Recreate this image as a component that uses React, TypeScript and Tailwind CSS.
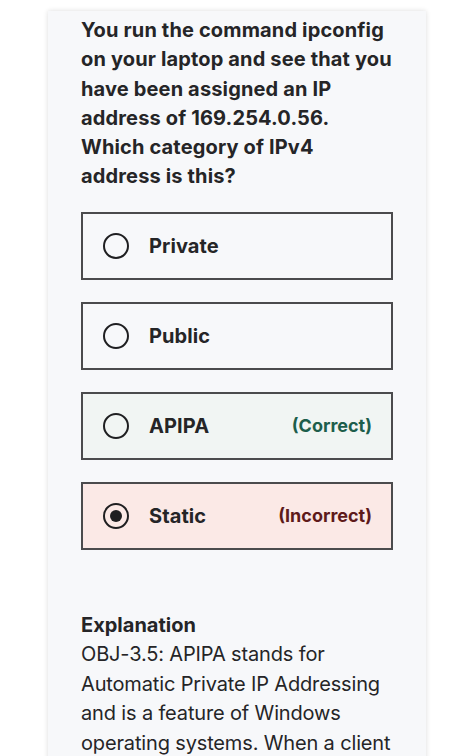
import React from "react";

type Opt = { label: string; state?: "correct" | "incorrect"; selected?: boolean };

const options: Opt[] = [
  { label: "Private" },
  { label: "Public" },
  { label: "APIPA", state: "correct" },
  { label: "Static", state: "incorrect", selected: true },
];

const question = [
  "You run the command ipconfig",
  "on your laptop and see that you",
  "have been assigned an IP",
  "address of 169.254.0.56.",
  "Which category of IPv4",
  "address is this?",
];

const explanation = [
  "OBJ-3.5: APIPA stands for",
  "Automatic Private IP Addressing",
  "and is a feature of Windows",
  "operating systems. When a client",
];

function Option({ o }: { o: Opt }) {
  const bg =
    o.state === "correct" ? "bg-[#f1f5f3]" : o.state === "incorrect" ? "bg-[#fbe9e6]" : "bg-[#f7f8fa]";
  return (
    <div className={`h-[68px] border-2 border-[#4b4b4d] ${bg} flex items-center pl-[20px] pr-[19px]`}>
      <div className="w-[26px] h-[26px] rounded-full border-[2.5px] border-[#1f1f21] flex items-center justify-center shrink-0">
        {o.selected && <div className="w-[12px] h-[12px] rounded-full bg-[#1f1f21]" />}
      </div>
      <span className="ml-[20px] text-[20px] font-bold text-[#252527] leading-none tracking-[0.1px]">{o.label}</span>
      {o.state === "correct" && (
        <span className="ml-auto text-[18px] font-bold text-[#1d5e4b] leading-none">(Correct)</span>
      )}
      {o.state === "incorrect" && (
        <span className="ml-auto text-[18px] font-bold text-[#5e1a1a] leading-none">(Incorrect)</span>
      )}
    </div>
  );
}

export default function App() {
  return (
    <div className="w-[474px] h-[756px] bg-white overflow-hidden pt-[11px]" style={{ fontFamily: "Inter, 'Noto Sans', sans-serif" }}>
      <div className="ml-[48px] w-[378px] min-h-[760px] bg-[#f7f8fa] shadow-[0_0_5px_rgba(0,0,0,0.14)] px-[33px] pt-[5px]">
        <p className="text-[20px] leading-[29.3px] font-bold text-[#252527] tracking-[0.15px]">
          {question.map((l) => (
            <span key={l} className="block whitespace-nowrap">
              {l}
            </span>
          ))}
        </p>
        <div className="mt-[20px] flex flex-col gap-[22px]">
          {options.map((o) => (
            <Option key={o.label} o={o} />
          ))}
        </div>
        <div className="mt-[61px] text-[20px] leading-[29.5px] text-[#252527]">
          <div className="font-bold">Explanation</div>
          <p className="tracking-[-0.15px]">
            {explanation.map((l) => (
              <span key={l} className="block whitespace-nowrap">
                {l}
              </span>
            ))}
          </p>
        </div>
      </div>
    </div>
  );
}
